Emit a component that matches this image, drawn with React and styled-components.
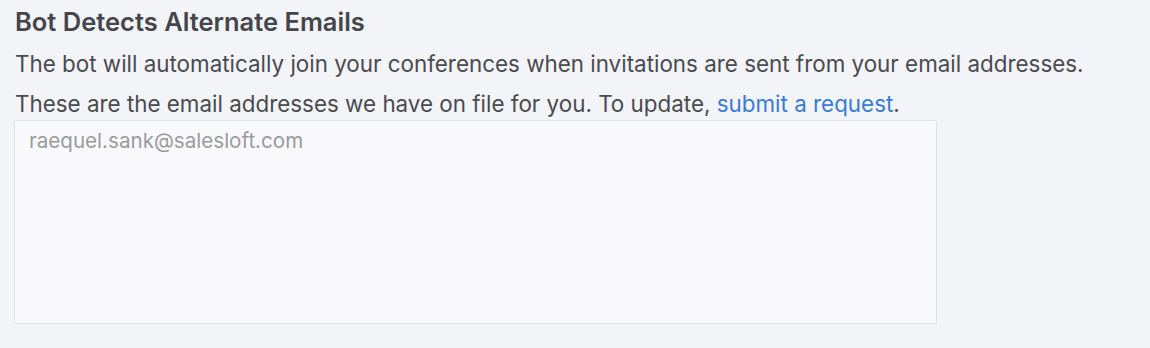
import React from 'react'
import styled, { createGlobalStyle } from 'styled-components'

const GlobalStyle = createGlobalStyle`
  html, body {
    margin: 0;
    padding: 0;
    background: #f3f4f8;
  }
  body {
    font-family: Inter, "Noto Sans", sans-serif;
  }
`

const Section = styled.section`
  padding: 6px 14px;
  display: flex;
  flex-direction: column;
`
const Title = styled.h2`
  margin: 0 0 10px;
  font-size: 25.5px;
  font-weight: 600;
  color: #45464c;
  line-height: 32px;
  padding-left: 1px;
`
const Text = styled.p`
  margin: 0 0 ${(p) => p.$gap || 0}px;
  font-size: 22.4px;
  line-height: 32px;
  color: #4a4b50;
  padding-left: 1px;
`
const RequestLink = styled.a`
  color: #3a7bd5;
  text-decoration: none;
`
const EmailBox = styled.textarea`
  width: 923px;
  height: 204px;
  box-sizing: border-box;
  margin: 0;
  padding: 7px 14px;
  background: #f9f9fb;
  border: 1px solid #e1e2e6;
  border-radius: 2px;
  font-family: Inter, "Noto Sans", sans-serif;
  font-size: 20.6px;
  color: #9a9ba0;
  resize: none;
  outline: none;
`

export default function App() {
  return (
    <>
      <GlobalStyle />
      <Section>
        <Title>Bot Detects Alternate Emails</Title>
        <Text $gap={8}>The bot will automatically join your conferences when invitations are sent from your email addresses.</Text>
        <Text>
          These are the email addresses we have on file for you. To update, <RequestLink href="#">submit a request</RequestLink>.
        </Text>
        <EmailBox readOnly value="raequel.sank@salesloft.com" />
      </Section>
    </>
  )
}
